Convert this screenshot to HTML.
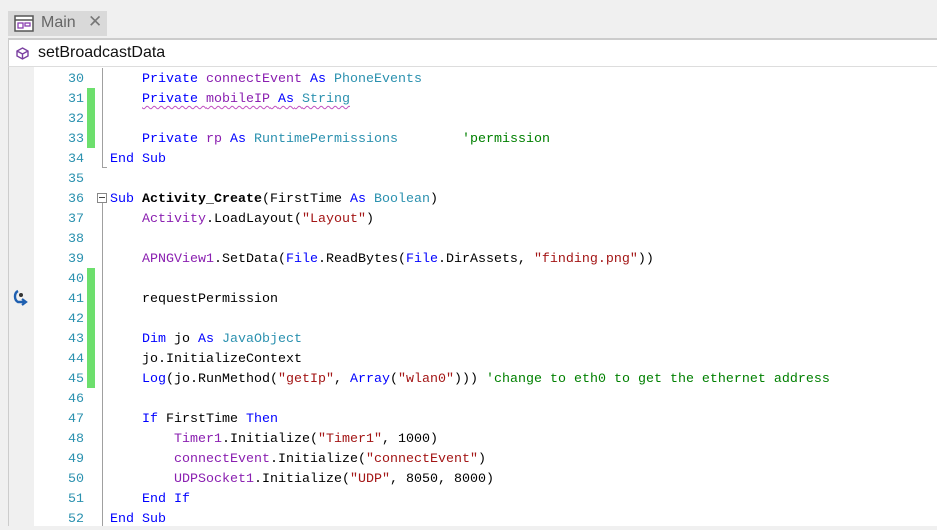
<!DOCTYPE html>
<html><head><meta charset="utf-8"><style>
*{margin:0;padding:0;box-sizing:border-box}
body{width:937px;height:526px;overflow:hidden;background:#f0f0f0;font-family:"Liberation Sans",sans-serif;position:relative}
.tab{position:absolute;left:8px;top:11px;width:99px;height:25px;background:#d9d9d9;}
.tab .t{position:absolute;left:33px;top:3px;font-size:16px;color:#666}
.tab .x{position:absolute;left:80px;top:1px;font-size:17px;color:#777}
.hdr{position:absolute;left:8px;top:38px;width:929px;height:29px;background:#fff;border-top:2px solid #ccc;border-left:1px solid #ccc;border-bottom:1px solid #ddd}
.hdr .t{position:absolute;left:29px;top:4px;font-size:16px;color:#111}
.left{position:absolute;left:8px;top:67px;width:26px;height:459px;background:#f0f0f0;border-left:1px solid #ccc}
.code{position:absolute;left:34px;top:67px;width:903px;height:459px;background:#fff}
.vl{position:absolute;left:102px;width:1px;background:#a0a0a0}
.g{position:absolute;left:87px;width:8px;background:#6ddf6d}
.ln{position:absolute;left:34px;width:50px;text-align:right;font:13.33px "Liberation Mono",monospace;color:#2b91af;line-height:20px}
.l{position:absolute;left:110px;font:13.33px "Liberation Mono",monospace;line-height:20px;white-space:pre;color:#000}
.k{color:#0000ff}.p{color:#8a1fb0}.ty{color:#2b91af}.s{color:#a31515}.c{color:#008000}
.sq{text-decoration:underline wavy #c050c0;text-decoration-thickness:1px;text-underline-offset:3px}
</style></head><body>
<div class="tab">
<svg style="position:absolute;left:6px;top:4px" width="20" height="17" viewBox="0 0 20 17"><rect x="1" y="1" width="18" height="15" fill="#fff" stroke="#555" stroke-width="1.5"/><line x1="1" y1="5" x2="19" y2="5" stroke="#555" stroke-width="1.5"/><rect x="4" y="8" width="5" height="5" fill="none" stroke="#8a3fb0" stroke-width="1.3"/><rect x="11" y="8" width="5" height="3" fill="none" stroke="#8a3fb0" stroke-width="1.3"/></svg>
<span class="t">Main</span><span class="x">✕</span></div>
<div class="hdr">
<svg style="position:absolute;left:7px;top:7px" width="13" height="13" viewBox="0 0 13 13"><path d="M6.5 1L12 4v5l-5.5 3L1 9V4z M1 4l5.5 3L12 4 M6.5 7v5" fill="none" stroke="#7a3fa0" stroke-width="1.4"/></svg>
<span class="t">setBroadcastData</span></div>
<div class="left"></div>
<div class="code"></div>
<div class="vl" style="top:68px;height:100px"></div>
<div style="position:absolute;left:102px;top:167px;width:5px;height:1px;background:#a0a0a0"></div>
<div style="position:absolute;left:97px;top:193px;width:10px;height:10px;border:1px solid #888;background:#fff"><div style="position:absolute;left:1px;top:3px;width:6px;height:1px;background:#444"></div></div>
<div class="vl" style="top:203px;height:323px"></div>
<div class="g" style="top:88px;height:60px"></div>
<div class="g" style="top:268px;height:120px"></div>
<svg style="position:absolute;left:13px;top:289px" width="16" height="18" viewBox="0 0 16 18"><path d="M5 2C1 4 1 11 5 13L11 13" fill="none" stroke="#1e5fb0" stroke-width="2.4"/><path d="M9 10l4 3-4 3" fill="none" stroke="#1e5fb0" stroke-width="2.2"/><circle cx="8" cy="6" r="2" fill="#333"/></svg>
<div class="ln" style="top:70px">30<br>31<br>32<br>33<br>34<br>35<br>36<br>37<br>38<br>39<br>40<br>41<br>42<br>43<br>44<br>45<br>46<br>47<br>48<br>49<br>50<br>51<br>52</div>
<div class="l" style="top:70px">    <span class="k">Private</span> <span class="p">connectEvent</span> <span class="k">As</span> <span class="ty">PhoneEvents</span>
    <span class="sq"><span class="k">Private</span> <span class="p">mobileIP</span> <span class="k">As</span> <span class="ty">String</span></span>

    <span class="k">Private</span> <span class="p">rp</span> <span class="k">As</span> <span class="ty">RuntimePermissions</span>        <span class="c">'permission</span>
<span class="k">End Sub</span>

<span class="k">Sub</span> <b>Activity_Create</b>(FirstTime <span class="k">As</span> <span class="ty">Boolean</span>)
    <span class="p">Activity</span>.LoadLayout(<span class="s">"Layout"</span>)

    <span class="p">APNGView1</span>.SetData(<span class="k">File</span>.ReadBytes(<span class="k">File</span>.DirAssets, <span class="s">"finding.png"</span>))

    requestPermission

    <span class="k">Dim</span> jo <span class="k">As</span> <span class="ty">JavaObject</span>
    jo.InitializeContext
    <span class="k">Log</span>(jo.RunMethod(<span class="s">"getIp"</span>, <span class="k">Array</span>(<span class="s">"wlan0"</span>))) <span class="c">'change to eth0 to get the ethernet address</span>

    <span class="k">If</span> FirstTime <span class="k">Then</span>
        <span class="p">Timer1</span>.Initialize(<span class="s">"Timer1"</span>, 1000)
        <span class="p">connectEvent</span>.Initialize(<span class="s">"connectEvent"</span>)
        <span class="p">UDPSocket1</span>.Initialize(<span class="s">"UDP"</span>, 8050, 8000)
    <span class="k">End If</span>
<span class="k">End Sub</span></div>
</body></html>
